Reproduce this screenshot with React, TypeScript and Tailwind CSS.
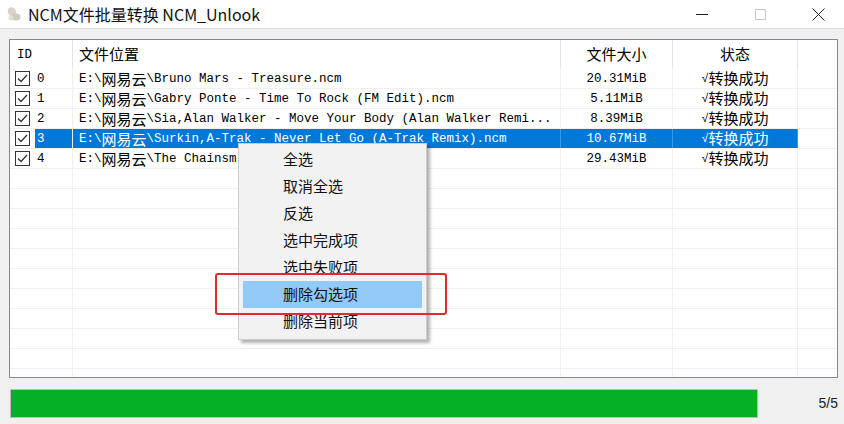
import React from "react";

const CJK = /([\u4e00-\u9fff]+)/;

function Mixed({ text }: { text: string }) {
  const parts = text.split(CJK);
  return (
    <>
      {parts.map((p, i) =>
        /[\u4e00-\u9fff]/.test(p) ? (
          <span key={i} className="text-[15px] font-['Noto_Sans_CJK_SC',sans-serif]">
            {p}
          </span>
        ) : (
          <span key={i}>{p}</span>
        )
      )}
    </>
  );
}

const rows = [
  { id: "0", path: "E:\\网易云\\Bruno Mars - Treasure.ncm", size: "20.31MiB" },
  { id: "1", path: "E:\\网易云\\Gabry Ponte - Time To Rock (FM Edit).ncm", size: "5.11MiB" },
  { id: "2", path: "E:\\网易云\\Sia,Alan Walker - Move Your Body (Alan Walker Remi...", size: "8.39MiB" },
  { id: "3", path: "E:\\网易云\\Surkin,A-Trak - Never Let Go (A-Trak Remix).ncm", size: "10.67MiB" },
  { id: "4", path: "E:\\网易云\\The Chainsm", size: "29.43MiB" },
];

const menuItems = ["全选", "取消全选", "反选", "选中完成项", "选中失败项", "删除勾选项", "删除当前项"];

function CheckBox() {
  return (
    <div className="w-[15px] h-[15px] border border-[#333333] bg-white flex items-center justify-center shrink-0">
      <svg width="13" height="13" viewBox="0 0 13 13">
        <path d="M2 6.5 L5 9.5 L11 3" fill="none" stroke="#333" strokeWidth="1.3" />
      </svg>
    </div>
  );
}

export default function App() {
  const emptyRows = Array.from({ length: 11 });
  return (
    <div className="relative w-[844px] h-[424px] bg-[#f0f0f0] overflow-hidden font-['Liberation_Mono','Noto_Sans_CJK_SC',monospace] text-black">
      {/* Title bar */}
      <div className="h-[29px] bg-white border-b border-[#dedede] flex items-center">
        <div className="w-[28px] h-full flex items-center justify-center">
          <svg width="18" height="18" viewBox="0 0 18 18">
            <ellipse cx="7" cy="7" rx="4" ry="5" fill="#d9d2c6" transform="rotate(-30 7 7)" />
            <ellipse cx="11" cy="12" rx="4.5" ry="3.5" fill="#cfcac2" />
            <circle cx="6" cy="13" r="2.5" fill="#e2ddd5" />
          </svg>
        </div>
        <div className="text-[16px] font-['Noto_Sans_CJK_SC',sans-serif] text-[#111] leading-none">
          NCM文件批量转换 NCM_Unlook
        </div>
        <div className="ml-auto flex h-full">
          <div className="w-[58px] h-full flex items-center justify-center">
            <div className="w-[12px] h-[1px] bg-[#222]" />
          </div>
          <div className="w-[58px] h-full flex items-center justify-center">
            <div className="w-[11px] h-[11px] border border-[#c8c8c8]" />
          </div>
          <div className="w-[55px] h-full flex items-center pl-[23px]">
            <svg width="13" height="13" viewBox="0 0 13 13">
              <path d="M0.5 0.5 L12.5 12.5 M12.5 0.5 L0.5 12.5" stroke="#222" strokeWidth="1" />
            </svg>
          </div>
        </div>
      </div>

      {/* List view */}
      <div className="pt-[10px] pl-[9px]">
        <div className="w-[829px] h-[339px] border border-[#828790] bg-white overflow-hidden text-[12.5px]">
          {/* Header */}
          <div className="flex h-[29px] items-center">
            <div className="w-[63px] h-full border-r border-[#e5e5e5] flex items-center pl-[7px] pt-[2px]">ID</div>
            <div className="w-[488px] h-full border-r border-[#e5e5e5] flex items-center pl-[6px] text-[15px] font-['Noto_Sans_CJK_SC',sans-serif]">
              文件位置
            </div>
            <div className="w-[112px] h-full border-r border-[#e5e5e5] flex items-center justify-center text-[15px] font-['Noto_Sans_CJK_SC',sans-serif]">
              文件大小
            </div>
            <div className="w-[125px] h-full border-r border-[#e5e5e5] flex items-center justify-center text-[15px] font-['Noto_Sans_CJK_SC',sans-serif]">
              状态
            </div>
            <div className="flex-1 h-full" />
          </div>
          {/* Rows */}
          {rows.map((r) => {
            const sel = r.id === "3";
            const cell = sel ? "bg-[#0078d7] text-white border-[#3d97e0]" : "border-[#f0f0f0]";
            return (
              <div key={r.id} className="flex h-[20px] border-b border-[#f0f0f0] whitespace-nowrap">
                <div className="w-[63px] h-full flex items-center border-r border-[#f0f0f0]">
                  <div className="pl-[5px] pr-[5px] h-full flex items-center">
                    <CheckBox />
                  </div>
                  <div className={`flex-1 h-full flex items-center pl-[2px] pt-[1px] ${sel ? "bg-[#0078d7] text-white" : ""}`}>{r.id}</div>
                </div>
                <div className={`w-[488px] h-full flex items-center pl-[6px] pt-[1px] border-r overflow-hidden leading-[20px] ${cell}`}>
                  <Mixed text={r.path} />
                </div>
                <div className={`w-[112px] h-full flex items-center justify-center pt-[1px] border-r ${cell}`}>{r.size}</div>
                <div className={`w-[125px] h-full flex items-center justify-center border-r ${cell}`}>
                  <span className="text-[12px]">√</span>
                  <span className="text-[15px] font-['Noto_Sans_CJK_SC',sans-serif]">转换成功</span>
                </div>
                <div className="flex-1 h-full" />
              </div>
            );
          })}
          {emptyRows.map((_, i) => (
            <div key={i} className="flex h-[20px] border-b border-[#f0f0f0]">
              <div className="w-[63px] h-full border-r border-[#f0f0f0]" />
              <div className="w-[488px] h-full border-r border-[#f0f0f0]" />
              <div className="w-[112px] h-full border-r border-[#f0f0f0]" />
              <div className="w-[125px] h-full border-r border-[#f0f0f0]" />
              <div className="flex-1 h-full" />
            </div>
          ))}
        </div>
      </div>

      {/* Progress row */}
      <div className="flex items-center mt-[11px]">
        <div className="ml-[10px] w-[748px] h-[29px] border border-[#bcbcbc] bg-[#e6e6e6]">
          <div className="w-full h-full bg-[#06b025]" />
        </div>
        <div className="ml-auto mr-[6px] text-[14px] text-[#222] font-['Liberation_Sans',sans-serif]">5/5</div>
      </div>

      {/* Context menu */}
      <div className="absolute left-[238px] top-[143px] w-[189px] h-[197px] bg-[#f2f2f2] border border-[#cccccc] shadow-[3px_3px_3px_rgba(0,0,0,0.3)] pt-[2px] px-[4px] font-['Noto_Sans_CJK_SC',sans-serif] text-[15px] text-[#111]">
        {menuItems.map((m, i) => (
          <div
            key={m}
            className={`h-[27px] flex items-center pl-[40px] ${i === 5 ? "bg-[#91c9f7]" : ""}`}
          >
            {m}
          </div>
        ))}
      </div>

      {/* Red annotation box */}
      <div className="absolute left-[215px] top-[273px] w-[232px] h-[42px] border-2 border-[#e02b2b] rounded-[3px]" />
    </div>
  );
}
